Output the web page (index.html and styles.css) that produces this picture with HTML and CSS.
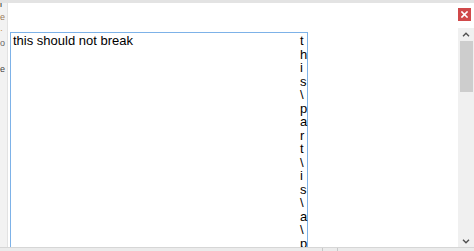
FILE: index.html
```html
<!DOCTYPE html>
<html>
<head>
<meta charset="utf-8">
<link rel="stylesheet" href="styles.css">
</head>
<body>
<div class="frame">
  <div class="topband"></div>
  <div class="mid">
    <div class="under">
      <div class="frag f1">l</div>
      <div class="frag f2">e</div>
      <div class="frag f3">·</div>
      <div class="frag f4">o</div>
      <div class="frag f5"></div>
      <div class="frag f6">e</div>
    </div>
    <div class="dialog">
      <div class="dialog-head">
        <button class="close" type="button">
          <svg width="7" height="7" viewBox="0 0 7 7"><path d="M1 1L6 6M6 1L1 6" stroke="#fff" stroke-width="1.6" stroke-linecap="square"/></svg>
        </button>
      </div>
      <div class="dialog-body">
        <div class="content">
          <div class="textarea">
            <div class="line">this should not break</div>
            <div class="col">
              <span>t</span><span>h</span><span>i</span><span>s</span><span>\</span><span>p</span><span>a</span><span>r</span><span>t</span><span>\</span><span>i</span><span>s</span><span>\</span><span>a</span><span>\</span><span>p</span><span>a</span><span>t</span><span>h</span>
            </div>
          </div>
        </div>
        <div class="scrollbar">
          <div class="sb-btn">
            <svg width="8" height="5" viewBox="0 0 8 5"><path d="M1 4.2L4 1.2L7 4.2" fill="none" stroke="#505050" stroke-width="1.4"/></svg>
          </div>
          <div class="sb-thumb"></div>
          <div class="sb-track"></div>
          <div class="sb-btn">
            <svg width="8" height="5" viewBox="0 0 8 5"><path d="M1 0.8L4 3.8L7 0.8" fill="none" stroke="#505050" stroke-width="1.4"/></svg>
          </div>
        </div>
      </div>
    </div>
  </div>
  <div class="bottomband">
    <span class="sep s1"></span>
    <span class="sep s2"></span>
  </div>
</div>
</body>
</html>
```
FILE: styles.css
```css
html, body {
  margin: 0;
  padding: 0;
}
body {
  width: 474px;
  height: 251px;
  overflow: hidden;
  background: #ececec;
  font-family: "Liberation Sans", Arial, sans-serif;
}
.frame {
  display: flex;
  flex-direction: column;
  height: 251px;
}
.topband {
  height: 3px;
  background: #e3e3e3;
  flex: none;
}
.mid {
  flex: 1;
  display: flex;
  min-height: 0;
}
.under {
  width: 8px;
  flex: none;
  background: #f2f2f2;
  border-right: 1px solid #e2e2e2;
  box-sizing: border-box;
  overflow: hidden;
  display: flex;
  flex-direction: column;
}
.frag {
  height: 13px;
  font-size: 9px;
  line-height: 13px;
  white-space: nowrap;
  padding-left: 0;
  color: #555;
}
.f1 { margin-top: -5px; color: #222; }
.f2 { color: #9a7a5a; }
.f3 { color: #c88a3a; }
.f4 { color: #666; }
.f6 { color: #444; }
.dialog {
  flex: 1;
  background: #fff;
  display: flex;
  flex-direction: column;
  min-width: 0;
}
.dialog-head {
  height: 25px;
  flex: none;
  display: flex;
  justify-content: flex-end;
  align-items: flex-start;
}
.close {
  margin: 5px 3px 0 0;
  width: 13px;
  height: 13px;
  padding: 0;
  border: none;
  background: #d0494a;
  display: flex;
  align-items: center;
  justify-content: center;
}
.dialog-body {
  flex: 1;
  display: flex;
  min-height: 0;
  overflow: hidden;
}
.content {
  flex: 1;
  padding: 4px 0 0 2px;
  overflow: hidden;
}
.textarea {
  width: 298px;
  height: 260px;
  box-sizing: border-box;
  border: 1px solid #7db2e8;
  display: flex;
  font-size: 13px;
  line-height: 13.5px;
  color: #000;
}
.line {
  flex: 1;
  padding: 1px 2px;
  white-space: nowrap;
}
.col {
  width: 7px;
  padding-top: 1px;
  display: flex;
  flex-direction: column;
}
.col span {
  display: block;
  height: 13.5px;
}
.scrollbar {
  width: 16px;
  flex: none;
  background: #f0f0f0;
  display: flex;
  flex-direction: column;
}
.sb-btn {
  height: 12px;
  display: flex;
  align-items: center;
  justify-content: center;
  flex: none;
}
.sb-thumb {
  height: 51px;
  margin: 1px 1px 0 2px;
  background: #cdcdcd;
  flex: none;
}
.sb-track {
  flex: 1;
}
.bottomband {
  height: 4px;
  flex: none;
  background: #ebebeb;
  border-top: 1px solid #d6d6d6;
  box-sizing: border-box;
  display: flex;
}
.sep {
  width: 1px;
  background: #c8c8c8;
}
.s1 { margin-left: 322px; }
.s2 { margin-left: 14px; }
```
